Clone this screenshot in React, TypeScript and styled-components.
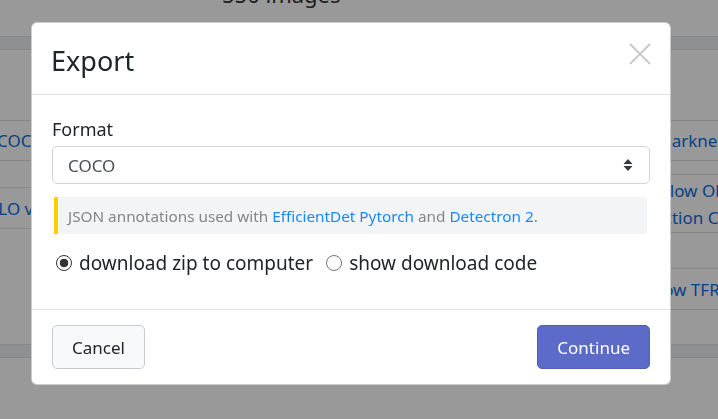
import styled, { createGlobalStyle } from "styled-components";

const GlobalStyle = createGlobalStyle`
    html, body {
        margin: 0;
        padding: 0;
        background: #fff;
        overflow: hidden;
    }
    body {
        font-family: "Noto Sans", "Open Sans", sans-serif;
        color: #212529;
    }
    * {
        box-sizing: border-box;
    }
`;

// page behind the dialog
const Page = styled.div`
    width: 718px;
    height: 419px;
    overflow: hidden;
`;

const Heading = styled.h2`
    margin: -20px 0 0 0;
    padding-left: 222px;
    font-size: 22px;
    font-weight: 400;
    line-height: 29px;
    color: #333;
`;

const Strip = styled.div<{ top: number }>`
    margin-top: ${(p) => p.top}px;
    height: 14px;
    background: #eef0f2;
    border-top: 1px solid #dee2e6;
    border-bottom: 1px solid #dee2e6;
`;

const Columns = styled.div`
    display: flex;
    height: 295px;
`;

const Column = styled.div<{ offset: number }>`
    width: 200px;
    flex: none;
    margin-left: ${(p) => p.offset}px;
    display: flex;
    flex-direction: column;
`;

const Cell = styled.div<{ top: number; h: number; shift?: number }>`
    margin-top: ${(p) => p.top}px;
    height: ${(p) => p.h}px;
    border-top: 1px solid #dee2e6;
    border-bottom: 1px solid #dee2e6;
    display: flex;
    align-items: center;
    justify-content: center;
    padding-right: ${(p) => p.shift || 0}px;
    text-align: center;
    font-size: 17px;
    line-height: 27px;
    color: #0a6fe0;
    white-space: nowrap;
`;

// dialog
const Overlay = styled.div`
    position: fixed;
    inset: 0;
    background: rgba(0, 0, 0, 0.4);
    padding: 22px 0 0 31px;
`;

const Modal = styled.div`
    width: 640px;
    background: #fff;
    border: 1px solid rgba(0, 0, 0, 0.2);
    border-radius: 6px;
`;

const Header = styled.div`
    display: flex;
    justify-content: space-between;
    align-items: flex-start;
    padding: 21px 19px 16px 19px;
    border-bottom: 1px solid #dee2e6;
`;

const Title = styled.h4`
    margin: 0;
    font-size: 27px;
    font-weight: 400;
    line-height: 34px;
    color: #212529;
`;

const Close = styled.button`
    border: 0;
    background: none;
    padding: 0;
    margin: -1px 0 0 0;
    width: 22px;
    height: 22px;
    cursor: pointer;
`;

const Body = styled.div`
    padding: 21px 20px 20px 20px;
`;

const Label = styled.div`
    font-size: 18px;
    line-height: 27px;
    color: #212529;
`;

const Select = styled.div`
    margin-top: 3px;
    height: 38px;
    border: 1px solid #ced4da;
    border-radius: 5px;
    display: flex;
    align-items: center;
    justify-content: space-between;
    padding: 0 16px 0 15px;
    font-size: 17px;
    color: #495057;
`;

const Note = styled.div`
    margin: 13px 3px 0 2px;
    height: 37px;
    background: #f3f4f6;
    border-left: 4px solid #ffd000;
    border-radius: 0 4px 4px 0;
    padding: 0 0 0 10px;
    display: flex;
    align-items: center;
    font-size: 15.3px;
    color: #858585;
    white-space: nowrap;
`;

const A = styled.a`
    color: #1a88f5;
    text-decoration: none;
`;

const Options = styled.div`
    margin-top: 15px;
    display: flex;
    align-items: center;
    gap: 13px;
    padding-left: 4px;
`;

const Option = styled.label`
    display: flex;
    align-items: center;
    gap: 7px;
    font-size: 19px;
    line-height: 28px;
    color: #212529;
`;

const Radio = styled.input`
    appearance: none;
    margin: 0;
    width: 16px;
    height: 16px;
    border-radius: 50%;
    border: 1px solid #767676;
    background: #fff;
    &:checked {
        border-color: #333;
        background: radial-gradient(circle, #333 0 4px, #fff 4.6px);
    }
`;

const Footer = styled.div`
    display: flex;
    justify-content: space-between;
    padding: 15px 20px;
    border-top: 1px solid #dee2e6;
    margin-top: 12px;
`;

const Button = styled.button<{ primary?: boolean }>`
    height: 44px;
    padding: 0 19px;
    border-radius: 5px;
    font-family: inherit;
    font-size: 17px;
    border: 1px solid ${(p) => (p.primary ? "#4f5eb8" : "#c6cbd1")};
    background: ${(p) => (p.primary ? "#5c6bc8" : "#f8f9fa")};
    color: ${(p) => (p.primary ? "#fff" : "#212529")};
`;

export default function App() {
    return (
        <>
            <GlobalStyle />
            <Page>
                <Heading>550 images</Heading>
                <Strip top={27} />
                <Columns>
                    <Column offset={-57}>
                        <Cell top={70} h={41}>COCO JSON</Cell>
                        <Cell top={26} h={42}>YOLO v5 PyTorch</Cell>
                    </Column>
                    <Column offset={439}>
                        <Cell top={70} h={41} shift={30}>YOLO Darknet</Cell>
                        <Cell top={13} h={59}>
                            Tensorflow Object
                            <br />
                            Detection CSV
                        </Cell>
                        <Cell top={35} h={42}>Tensorflow TFRecord</Cell>
                    </Column>
                </Columns>
                <Strip top={-1} />
            </Page>
            <Overlay>
                <Modal>
                    <Header>
                        <Title>Export</Title>
                        <Close aria-label="Close">
                            <svg width="22" height="22" viewBox="0 0 22 22">
                                <path
                                    d="M1 1 L21 21 M21 1 L1 21"
                                    stroke="#c9c9c9"
                                    strokeWidth="2"
                                />
                            </svg>
                        </Close>
                    </Header>
                    <Body>
                        <Label>Format</Label>
                        <Select>
                            <span>COCO</span>
                            <svg width="10" height="14" viewBox="0 0 10 14">
                                <path d="M5 1 L9.5 6 H0.5 Z M5 13 L9.5 8 H0.5 Z" fill="#343a40" />
                            </svg>
                        </Select>
                        <Note>
                            JSON annotations used with&nbsp;<A href="#">EfficientDet Pytorch</A>
                            &nbsp;and&nbsp;<A href="#">Detectron 2</A>.
                        </Note>
                        <Options>
                            <Option>
                                <Radio type="radio" name="dl" defaultChecked />
                                download zip to computer
                            </Option>
                            <Option>
                                <Radio type="radio" name="dl" />
                                show download code
                            </Option>
                        </Options>
                    </Body>
                    <Footer>
                        <Button>Cancel</Button>
                        <Button primary>Continue</Button>
                    </Footer>
                </Modal>
            </Overlay>
        </>
    );
}
